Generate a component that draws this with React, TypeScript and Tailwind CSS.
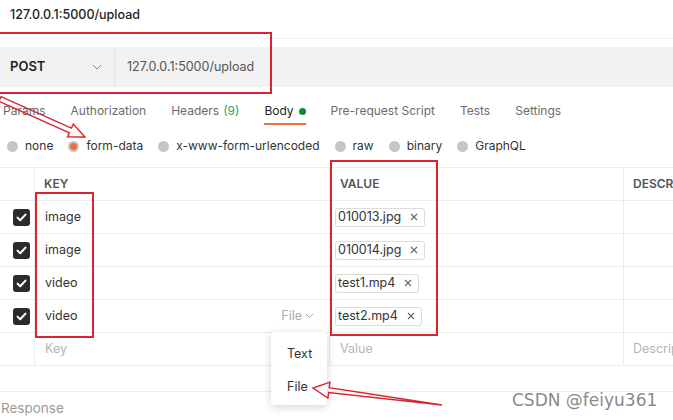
import React from 'react';

const rows = [
  { key: 'image', value: '010013.jpg' },
  { key: 'image', value: '010014.jpg' },
  { key: 'video', value: 'test1.mp4' },
  { key: 'video', value: 'test2.mp4', showType: true },
];

const tabs = ['Params', 'Authorization', 'Headers', 'Body', 'Pre-request Script', 'Tests', 'Settings'];

const radios = ['none', 'form-data', 'x-www-form-urlencoded', 'raw', 'binary', 'GraphQL'];

function Check() {
  return (
    <div className="w-[17px] h-[17px] rounded-[3px] bg-[#2b2b2b] flex items-center justify-center">
      <svg width="11" height="9" viewBox="0 0 11 9" fill="none">
        <path d="M1.5 4.6 L4.2 7.2 L9.5 1.6" stroke="white" strokeWidth="2" strokeLinecap="round" strokeLinejoin="round" />
      </svg>
    </div>
  );
}

function Chip({ name }: { name: string }) {
  return (
    <div className="h-[19px] inline-flex items-center gap-[9px] border border-[#dcdcdc] rounded-[3px] pl-[2px] pr-[6px] text-[12.5px] text-[#333]">
      <span>{name}</span>
      <svg width="8" height="8" viewBox="0 0 8 8">
        <path d="M1 1 L7 7 M7 1 L1 7" stroke="#666" strokeWidth="1.1" />
      </svg>
    </div>
  );
}

export default function App() {
  return (
    <div className="relative w-[673px] h-[420px] overflow-hidden bg-white font-['Inter',sans-serif] text-[#333]">
      {/* title */}
      <div className="h-[39px] border-b border-[#f0f0f0] pl-[10px] pt-[7px]">
        <div className="text-[12.5px] font-medium text-[#222] leading-[16px]">127.0.0.1:5000/upload</div>
      </div>

      {/* request bar */}
      <div className="mt-[8px] h-[40px] bg-[#f2f2f2] flex">
        <div className="w-[115px] shrink-0 border-r border-[#e4e4e4] flex items-center justify-between pl-[10px] pr-[12px]">
          <span className="text-[13px] font-semibold text-[#222]">POST</span>
          <svg width="10" height="6" viewBox="0 0 10 6">
            <path d="M1 1 L5 5 L9 1" stroke="#888" strokeWidth="1" fill="none" />
          </svg>
        </div>
        <div className="flex items-center pl-[12px] text-[12.5px] text-[#555]">127.0.0.1:5000/upload</div>
      </div>

      {/* tabs */}
      <div className="h-[38px] flex items-end gap-[25px] pl-[3px] text-[12px] text-[#6b6b6b]">
        {tabs.map((t) => (
          <div
            key={t}
            className={`h-[38px] flex items-center pt-[12px] ${t === 'Body' ? 'border-b-2 border-[#f26b3a] text-[#222]' : 'border-b-2 border-transparent'}`}
          >
            <span>{t}</span>
            {t === 'Headers' && <span className="ml-[4px] text-[#2f9e5f]">(9)</span>}
            {t === 'Body' && <span className="ml-[5px] w-[7px] h-[7px] rounded-full bg-[#0b8a3e]" />}
          </div>
        ))}
      </div>

      {/* radio row */}
      <div className="h-[42px] flex items-center pl-[7px] text-[12px] text-[#333]">
        {radios.map((r) => (
          <div key={r} className="flex items-center mr-[15px]">
            <div className="w-[11px] h-[11px] rounded-full bg-[#c6c6c6] flex items-center justify-center mr-[7px]">
              {r === 'form-data' && <div className="w-[7px] h-[7px] rounded-full bg-[#f26b3a]" />}
            </div>
            <span>{r}</span>
          </div>
        ))}
      </div>

      {/* table */}
      <div className="border-t border-[#ececec]">
        <div className="flex h-[33px] border-b border-[#ececec] text-[12px] font-semibold text-[#555]">
          <div className="w-[35px] shrink-0 border-r border-[#ececec]" />
          <div className="w-[295px] shrink-0 flex items-center pl-[9px] border-r border-[#ececec]">KEY</div>
          <div className="w-[294px] shrink-0 flex items-center pl-[10px] border-r border-[#ececec]">VALUE</div>
          <div className="flex-1 min-w-0 overflow-hidden whitespace-nowrap flex items-center pl-[9px]">DESCRIPTION</div>
        </div>
        {rows.map((r, i) => (
          <div key={i} className="flex h-[33px] border-b border-[#ececec] text-[12.5px]">
            <div className="w-[35px] shrink-0 flex items-center pl-[13px] border-r border-[#ececec]">
              <Check />
            </div>
            <div className="w-[295px] shrink-0 flex items-center justify-between pl-[10px] pr-[15px] border-r border-[#ececec]">
              <span className="text-[#333]">{r.key}</span>
              {r.showType && (
                <span className="flex items-center gap-[3px] text-[#aaa]">
                  File
                  <svg width="9" height="6" viewBox="0 0 9 6">
                    <path d="M1 1 L4.5 4.5 L8 1" stroke="#aaa" strokeWidth="1" fill="none" />
                  </svg>
                </span>
              )}
            </div>
            <div className="w-[294px] shrink-0 flex items-center pl-[5px] border-r border-[#ececec]">
              <Chip name={r.value} />
            </div>
            <div className="flex-1 min-w-0" />
          </div>
        ))}
        <div className="flex h-[33px] border-b border-[#ececec] text-[12.5px] text-[#b5b5b5]">
          <div className="w-[35px] shrink-0 border-r border-[#ececec]" />
          <div className="w-[295px] shrink-0 flex items-center pl-[10px] border-r border-[#ececec]">Key</div>
          <div className="w-[294px] shrink-0 flex items-center pl-[10px] border-r border-[#ececec]">Value</div>
          <div className="flex-1 min-w-0 overflow-hidden whitespace-nowrap flex items-center pl-[9px]">Description</div>
        </div>
      </div>

      <div className="h-[26px] border-b border-[#ececec]" />
      <div className="pt-[6px] pl-[1px] text-[13.5px] text-[#9a9a9a]">Response</div>

      {/* dropdown menu */}
      <div className="absolute left-[271px] top-[332px] w-[56px] h-[73px] bg-white rounded-[3px] shadow-[0_2px_8px_rgba(0,0,0,0.18)] flex flex-col pl-[16px] pt-[13px] gap-[14px] text-[12.5px] text-[#333]">
        <span>Text</span>
        <span>File</span>
      </div>

      {/* annotation boxes */}
      <div className="absolute left-[-2px] top-[32px] w-[274px] h-[62px] border-2 border-[#d8252e]" />
      <div className="absolute left-[35px] top-[192px] w-[59px] h-[146px] border-2 border-[#d8252e]" />
      <div className="absolute left-[330px] top-[160px] w-[108px] h-[176px] border-2 border-[#d8252e]" />

      {/* arrows */}
      <svg className="absolute left-0 top-0 pointer-events-none" width="673" height="420" viewBox="0 0 673 420">
        <polygon
          points="-1,101.3 69.4,132.8 67.5,136.9 85,137 73.3,124.1 71.4,128.2 1,96.7"
          fill="none"
          stroke="#d8252e"
          strokeWidth="1.4"
          strokeLinejoin="miter"
        />
        <polygon
          points="442,405 328.6,392.6 327.9,398 313,388 330,382.2 329.2,387.6"
          fill="none"
          stroke="#d8252e"
          strokeWidth="1.4"
        />
      </svg>

      {/* watermark */}
      <div className="absolute left-[512px] top-[388px] text-[17px] text-[#8a8a8a] font-['DejaVu_Sans',sans-serif]">
        CSDN @feiyu361
      </div>
    </div>
  );
}
